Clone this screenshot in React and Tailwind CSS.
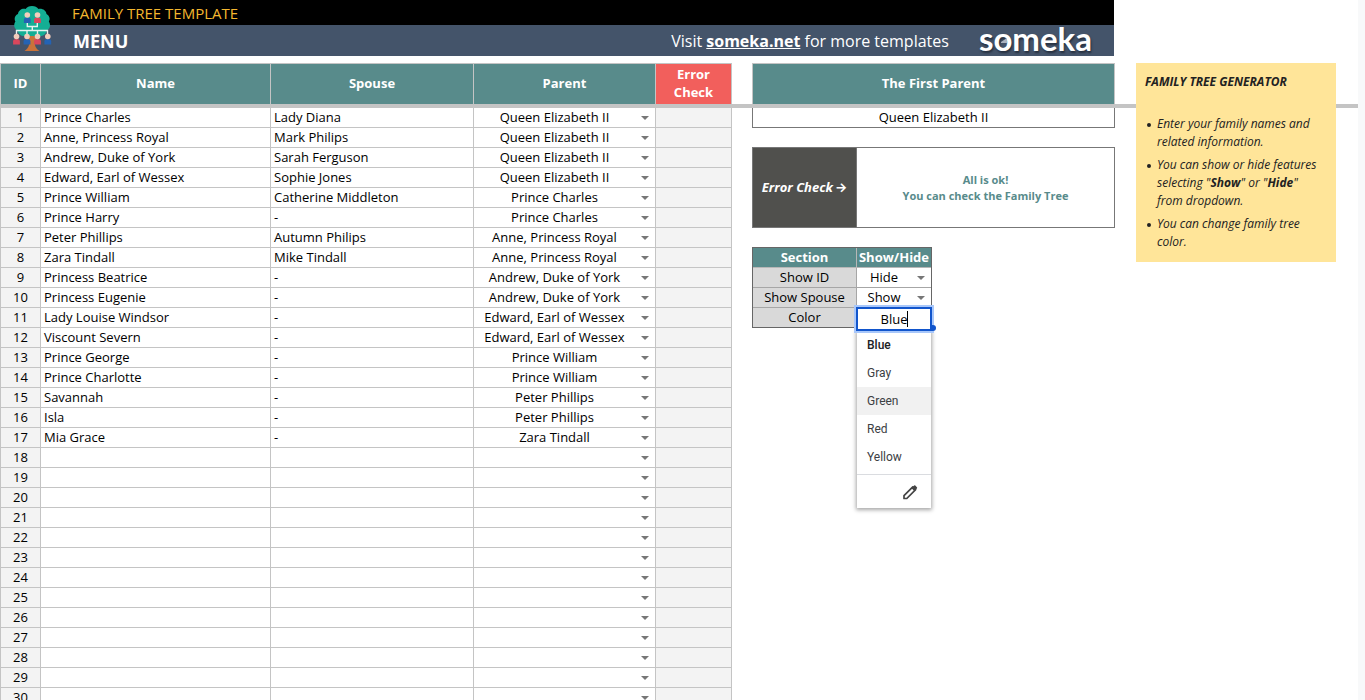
import React, { useState } from "react";

const people = [
  { name: "Prince Charles", spouse: "Lady Diana", parent: "Queen Elizabeth II" },
  { name: "Anne, Princess Royal", spouse: "Mark Philips", parent: "Queen Elizabeth II" },
  { name: "Andrew, Duke of York", spouse: "Sarah Ferguson", parent: "Queen Elizabeth II" },
  { name: "Edward, Earl of Wessex", spouse: "Sophie Jones", parent: "Queen Elizabeth II" },
  { name: "Prince William", spouse: "Catherine Middleton", parent: "Prince Charles" },
  { name: "Prince Harry", spouse: "-", parent: "Prince Charles" },
  { name: "Peter Phillips", spouse: "Autumn Philips", parent: "Anne, Princess Royal" },
  { name: "Zara Tindall", spouse: "Mike Tindall", parent: "Anne, Princess Royal" },
  { name: "Princess Beatrice", spouse: "-", parent: "Andrew, Duke of York" },
  { name: "Princess Eugenie", spouse: "-", parent: "Andrew, Duke of York" },
  { name: "Lady Louise Windsor", spouse: "-", parent: "Edward, Earl of Wessex" },
  { name: "Viscount Severn", spouse: "-", parent: "Edward, Earl of Wessex" },
  { name: "Prince George", spouse: "-", parent: "Prince William" },
  { name: "Prince Charlotte", spouse: "-", parent: "Prince William" },
  { name: "Savannah", spouse: "-", parent: "Peter Phillips" },
  { name: "Isla", spouse: "-", parent: "Peter Phillips" },
  { name: "Mia Grace", spouse: "-", parent: "Zara Tindall" },
];

const rows = Array.from({ length: 30 }, (_, i) => ({ id: i + 1, ...people[i] }));

const parents = ["", "Queen Elizabeth II", ...people.map((p) => p.name)];

const colors = ["Blue", "Gray", "Green", "Red", "Yellow"];

const Person = ({ x, y, fill }) => (
  <g transform={`translate(${x} ${y})`}>
    <path d="M-3.4 8V4.800Q-3.400 2.400 0 2.400T3.400 4.800V8Z" fill={fill} />
    <circle r="2.8" fill="#f3cdbb" />
  </g>
);

const TreeLogo = () => (
  <svg viewBox="0 0 45 52" className="h-[52px] w-[45px]" aria-hidden="true">
    <path
      d="M22 4c3 0 5 1 6.500 3 4-.8 7.500 1.500 8 5 3 1.500 4 5 2.300 7.600 2.200 3.400 1.200 7.400-2 8.900-.8 4-4.500 6.300-8 5.500H15.500c-4 .6-7.400-1.600-8-5.500-3.300-1.500-4.300-5.500-2.100-8.900C3.800 16.500 5 13.300 8 12c.4-3.700 4-5.800 7.600-5C17 5 19 4 22 4Z"
      transform="translate(0 2)"
      fill="#14ae94"
    />
    <path d="M20 36 17 38l2 3c.6 5-.6 7-4.500 10H29.500c-4-3-5-5-4.500-10l2-3-3-2Z" fill="#c9733a" />
    <path d="M17.300 22v4.500h10V22M22.300 26.500v4M6.500 36v-5.500h31V36M17 36v-5.500M27.500 36v-5.500" fill="none" stroke="#e6f3ef" strokeWidth="1.400" />
    <Person x={17.3} y={15} fill="#2463b4" />
    <Person x={27.5} y={15} fill="#d9475c" />
    <Person x={6.5} y={36.5} fill="#d9475c" />
    <Person x={17} y={36.5} fill="#2463b4" />
    <Person x={27.5} y={36.5} fill="#d9475c" />
    <Person x={37.8} y={36.5} fill="#2463b4" />
  </svg>
);

const Caret = ({ className }) => (
  <svg viewBox="0 0 8 4" className={`pointer-events-none absolute h-1 w-2 ${className}`} aria-hidden="true">
    <path d="M0 0h8L4 4Z" fill="#777" />
  </svg>
);

const CellSelect = ({ label, value, options }) => (
  <div className="relative">
    <select
      aria-label={label}
      defaultValue={value}
      className="block h-[19px] w-full appearance-none bg-transparent pr-5 text-center leading-[19px] outline-none"
    >
      {options.map((o, i) => (
        <option key={i} value={o}>
          {o}
        </option>
      ))}
    </select>
    <Caret className="top-2 right-1.5" />
  </div>
);

const Header = () => (
  <header className="relative mr-px">
    <div className="h-[25px] bg-black pl-[72px] text-[15px] leading-[27px] text-[#f4b72f]">FAMILY TREE TEMPLATE</div>
    <div className="flex h-[31px] items-center bg-[#44546a] pr-[22px] pl-[73px] text-white">
      <h1 className="pt-0.5 text-[18px] font-bold">MENU</h1>
      <p className="ml-auto text-[16px]">
        Visit{" "}
        <a href="#someka" className="font-bold underline">
          someka.net
        </a>{" "}
        for more templates
      </p>
      <div className="relative ml-[30px] pb-1 font-['Lato'] text-[33px] leading-[27px] font-bold [text-shadow:1px_2px_2px_#26303f]">
        someka
        {/* small chart inside the "o" */}
        <svg viewBox="0 0 6 5" className="absolute top-[13px] left-[22px] h-[5px] w-1.5" aria-hidden="true">
          <path d="M0 5V4L6 0v5Z" fill="#aab4c2" />
        </svg>
      </div>
    </div>
    <div className="absolute top-0 left-[10px]">
      <TreeLogo />
    </div>
  </header>
);

const FamilyTable = () => {
  const th = "h-[41px] border-t border-r border-[#c4c4c4] px-0 pt-0 pb-0.5 leading-[18px] font-bold text-white";
  const td = "h-5 border-r border-b border-[#c4c4c4] p-0";

  return (
    <table className="w-full table-fixed border-separate border-spacing-0 border-l border-[#c4c4c4] leading-[19px]">
      <colgroup>
        <col className="w-10" />
        <col />
        <col className="w-[203px]" />
        <col className="w-[182px]" />
        <col className="w-[76px]" />
      </colgroup>
      <thead>
        <tr>
          <th className={`${th} bg-[#588b8b]`}>ID</th>
          <th className={`${th} bg-[#588b8b]`}>Name</th>
          <th className={`${th} bg-[#588b8b]`}>Spouse</th>
          <th className={`${th} bg-[#588b8b]`}>Parent</th>
          <th className={`${th} bg-[#f25f5c]`}>
            Error
            <br />
            Check
          </th>
        </tr>
        <tr aria-hidden="true">
          <td colSpan={5} className="h-1 p-0" />
        </tr>
      </thead>
      <tbody>
        {rows.map((row) => (
          <tr key={row.id}>
            <td className={`${td} bg-[#f3f3f3] text-center`}>{row.id}</td>
            <td className={`${td} pl-[3px]`}>{row.name}</td>
            <td className={`${td} pl-[3px]`}>{row.spouse}</td>
            <td className={td}>
              <CellSelect label={`Parent of ID ${row.id}`} value={row.parent || ""} options={parents} />
            </td>
            <td className={`${td} bg-[#f3f3f3]`} />
          </tr>
        ))}
      </tbody>
    </table>
  );
};

const ColorPicker = () => {
  const [color, setColor] = useState("Blue");

  return (
    <div className="relative h-5">
      <div className="absolute -top-px -right-px -left-px z-20">
        <div className="relative z-10 flex h-6 items-center border-2 border-[#1155cc] bg-white ring-2 ring-[#a8c7fa]">
          <input
            aria-label="Color"
            value={color}
            onChange={(e) => setColor(e.target.value)}
            className="w-full bg-transparent text-center outline-none"
          />
          <span className="absolute top-0.5 right-[22px] h-4 w-px bg-black" />
          {/* fill handle */}
          <span className="absolute -right-1.5 -bottom-0.5 h-1.5 w-1 rounded-r-full bg-[#1155cc]" />
        </div>
        <div className="mx-px bg-white font-['Roboto'] text-[12px] text-[#3c4043] shadow-[0_1px_4px_1px_rgba(0,0,0,0.35)]">
          <ul className="pb-[3px]">
            {colors.map((c) => (
              <li key={c}>
                <button
                  type="button"
                  onClick={() => setColor(c)}
                  className={`block h-7 w-full pl-2.5 text-left ${c === "Green" ? "bg-[#f1f1f1]" : ""} ${
                    c === "Blue" ? "font-medium text-[#202124]" : ""
                  }`}
                >
                  {c}
                </button>
              </li>
            ))}
          </ul>
          <div className="flex h-[34px] items-center justify-end border-t border-[#dadce0] pr-3">
            <button type="button" aria-label="Edit">
              <svg viewBox="0 0 18 18" className="h-[18px] w-[18px]" aria-hidden="true">
                <path d="M3 15.500v-2.800L11.800 3.900l2.800 2.800-8.800 8.800Z" fill="none" stroke="#444" strokeWidth="1.700" strokeLinejoin="round" />
                <path d="m10.500 5.200 2.800 2.800 2.600-2.600q.6-.6 0-1.200l-1.600-1.600q-.6-.6-1.200 0Z" fill="#444" />
              </svg>
            </button>
          </div>
        </div>
      </div>
    </div>
  );
};

const SettingsTable = () => {
  const head = "h-5 border-b border-[#b7b7b7] bg-[#588b8b] p-0 font-bold text-white";
  const label = "h-5 border-r border-b bg-[#d9d9d9] p-0 text-center font-normal";

  return (
    <table className="w-[180px] table-fixed border-separate border-spacing-0 border-t border-r border-l border-[#666] leading-[19px]">
      <colgroup>
        <col className="w-[104px]" />
        <col />
      </colgroup>
      <thead>
        <tr>
          <th className={`${head} border-r`}>Section</th>
          <th className={head}>Show/Hide</th>
        </tr>
      </thead>
      <tbody>
        <tr>
          <th className={`${label} border-[#a6a6a6]`}>Show ID</th>
          <td className="h-5 border-b border-[#a6a6a6] p-0">
            <CellSelect label="Show ID" value="Hide" options={["Show", "Hide"]} />
          </td>
        </tr>
        <tr>
          <th className={`${label} border-[#a6a6a6]`}>Show Spouse</th>
          <td className="h-5 border-b border-[#a6a6a6] p-0">
            <CellSelect label="Show Spouse" value="Show" options={["Show", "Hide"]} />
          </td>
        </tr>
        <tr>
          <th className={`${label} border-[#666]`}>Color</th>
          <td className="p-0">
            <ColorPicker />
          </td>
        </tr>
      </tbody>
    </table>
  );
};

const SidePanel = () => (
  <div className="flex flex-col gap-[19px]">
    <section className="text-center">
      <h2 className="h-[41px] border-x border-t border-[#c4c4c4] bg-[#588b8b] leading-[38px] font-bold text-white">The First Parent</h2>
      <div className="mt-1 h-5 border-x border-b border-[#777] leading-[19px]">Queen Elizabeth II</div>
    </section>
    <section className="flex h-[81px] border border-[#777] font-bold">
      <div className="flex w-[104px] items-center justify-center gap-0.5 border-r border-[#777] bg-[#50504d] text-white italic">
        Error Check <span className="font-['Inter'] not-italic">→</span>
      </div>
      <p className="flex flex-1 items-center justify-center text-center text-[11px] leading-4 text-[#588b8b]">
        All is ok!
        <br />
        You can check the Family Tree
      </p>
    </section>
    <SettingsTable />
  </div>
);

const Note = () => (
  <aside className="absolute top-[63px] right-[22px] z-20 h-[199px] w-[200px] bg-[#ffe599] pt-2.5 pr-3 pl-[9px] text-[12px] leading-[18px] text-[#222] italic">
    <h2 className="font-bold">FAMILY TREE GENERATOR</h2>
    <ul className="mt-6 space-y-[5px]">
      {[
        <>Enter your family names and related information.</>,
        <>
          You can show or hide features selecting "<b>Show</b>" or "<b>Hide</b>" from dropdown.
        </>,
        <>You can change family tree color.</>,
      ].map((text, i) => (
        <li key={i} className="flex gap-1.5 pl-0.5">
          <span className="mt-2 h-1 w-1 shrink-0 rounded-full bg-[#222]" />
          <p>{text}</p>
        </li>
      ))}
    </ul>
  </aside>
);

const App = () => {
  return (
    <div className="flex h-screen overflow-hidden bg-white font-['Open_Sans','Noto_Sans',sans-serif] text-[13px] text-black">
      <div className="relative min-w-0 flex-1">
        <div className="mr-[243px]">
          <Header />
          <main className="mt-[7px] flex items-start gap-5">
            <div className="min-w-0 flex-[732_1_0%]">
              <FamilyTable />
            </div>
            <div className="min-w-0 flex-[363_1_0%]">
              <SidePanel />
            </div>
          </main>
        </div>
        {/* frozen rows divider */}
        <div className="absolute inset-x-0 top-[104px] z-10 h-1 bg-[#c4c4c4]" />
        <Note />
      </div>
      <div className="w-[7px] bg-[#f8f9fa]" />
    </div>
  );
};

export default App;
